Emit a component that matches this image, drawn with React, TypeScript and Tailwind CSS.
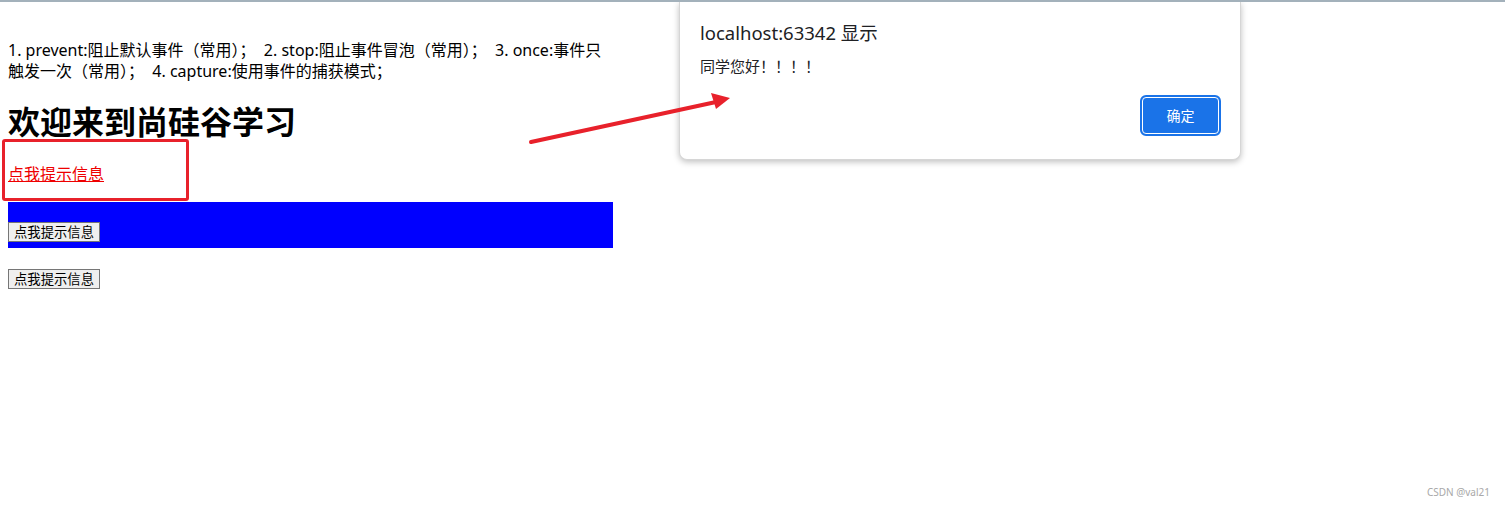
const font = { fontFamily: '"Noto Sans", "Noto Sans CJK SC", sans-serif' };

function AlertDialog() {
  return (
    <div className="absolute left-[679px] top-0 w-[562px] h-[158px] bg-white rounded-b-lg border border-t-0 border-[#d6d6d6] shadow-[0_2px_6px_rgba(0,0,0,0.25)] flex flex-col px-5">
      <div className="pt-[18px] text-[18.5px] leading-[26px] text-[#202124]">localhost:63342 显示</div>
      <div className="pt-[10px] text-[15px] leading-[20px] text-[#202124]">同学您好！！！！</div>
      <div className="flex justify-end pt-[19px]">
        <button className="w-[81px] h-[41px] rounded-[6px] bg-[#1a73e8] border-2 border-[#1a73e8] outline-none text-white text-[14px] mr-[-1px]">
          <span className="flex items-center justify-center w-full h-full rounded-[4px] border border-white">确定</span>
        </button>
      </div>
    </div>
  );
}

export default function App() {
  return (
    <div className="relative w-[1505px] h-[508px] bg-white border-t-2 border-[#a3b1bb] overflow-hidden" style={font}>
      <div className="w-[605px] ml-2 pt-[38px] text-black">
        <p className="text-[16px] leading-[21px]">
          1. prevent:阻止默认事件（常用）；&nbsp; 2. stop:阻止事件冒泡（常用）；&nbsp; 3. once:事件只触发一次（常用）；&nbsp; 4. capture:使用事件的捕获模式；
        </p>
        <h1 className="mt-[19px] text-[32px] leading-[42px] font-bold">欢迎来到尚硅谷学习</h1>
        <div className="mt-[21px] text-[16px] leading-[21px]">
          <a href="#" className="text-[#ee0000] underline">点我提示信息</a>
        </div>
        <div className="mt-[17px] h-[46px] bg-[#0000ff] pt-[20px]">
          <button className="flex items-center h-[20px] px-[5px] bg-[#efefef] border border-[#767676] text-[13.33px] leading-[16px] text-black">
            点我提示信息
          </button>
        </div>
        <div className="mt-[21px]">
          <button className="flex items-center h-[20px] px-[5px] bg-[#efefef] border border-[#767676] text-[13.33px] leading-[16px] text-black">
            点我提示信息
          </button>
        </div>
      </div>

      {/* annotation box */}
      <div className="absolute left-[2px] top-[137px] w-[187px] h-[62px] border-[3px] border-[#e8212b] rounded-[3px]" />

      <AlertDialog />

      {/* annotation arrow, drawn over the dialog */}
      <svg className="absolute left-0 top-0 pointer-events-none" width="1505" height="508">
        <line x1="531" y1="140" x2="716" y2="100" stroke="#e8212b" strokeWidth="4" strokeLinecap="round" />
        <polygon points="730,96 711,91 716,107" fill="#e8212b" />
      </svg>

      <div className="absolute right-[15px] bottom-[8px] text-[10px] text-[#a8a8a8]">CSDN @val21</div>
    </div>
  );
}
